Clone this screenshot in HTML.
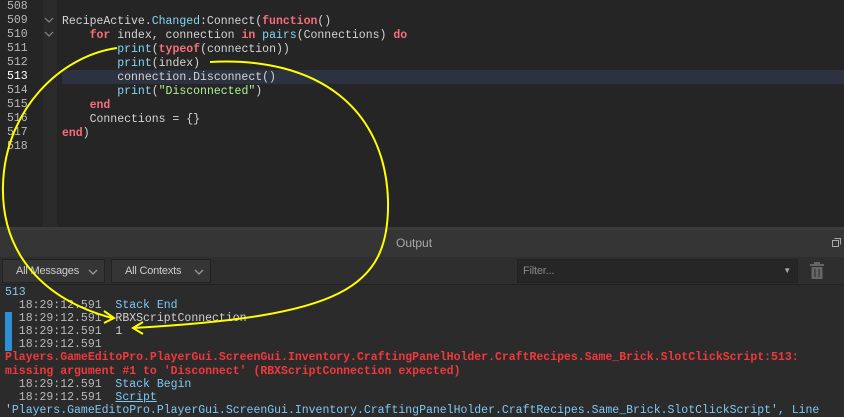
<!DOCTYPE html>
<html><head><style>
*{margin:0;padding:0;box-sizing:border-box}
body{width:844px;height:413px;overflow:hidden;background:#2b2b2b;font-family:"Liberation Mono",monospace;position:relative}
.ed{position:absolute;left:0;top:0;width:844px;height:227px;background:#252525}
.gut{position:absolute;left:43px;top:0;width:14px;height:227px;background:#2a2a2a}
.ln{position:absolute;left:7px;color:#b8b8b8;font-size:11.5px;line-height:14px}
.code{position:absolute;left:62px;top:1px;color:#d4d4d4;font-size:11.5px;line-height:14px;white-space:pre}
.k{color:#f86d7c;font-weight:bold}.b{color:#84d6f7}.s{color:#adf195}
.hl{position:absolute;left:62px;top:70px;width:782px;height:14px;background:#2d3240}
.sep{position:absolute;left:0;top:227px;width:844px;height:3px;background:#3b3b3b}
.title{position:absolute;left:0;top:230px;width:844px;height:27px;background:#353535;color:#aaa;font-family:"Liberation Sans",sans-serif;font-size:12px}
.tb{position:absolute;left:0;top:257px;width:844px;height:28px;background:#2e2e2e;border-bottom:1px solid #222}
.dd{position:absolute;top:2px;height:24px;border:1px solid #222;background:#353535;color:#ccc;font-family:"Liberation Sans",sans-serif;font-size:11px;line-height:22px;padding-left:13px;letter-spacing:-0.2px}
.log{position:absolute;left:5px;top:286px;font-size:11.5px;line-height:13.1px;color:#d0d0d0;white-space:pre}
.t{color:#b8b8b8}.c{color:#7fc8f4}.r{color:#f0393d;font-weight:bold}
</style></head><body>
<div class="ed">
<div class="gut"></div>
<div class="hl"></div>
<div class="ln" style="top:0px">508<br>509<br>510<br>511<br>512<br><span style="color:#fff">513</span><br>514<br>515<br>516<br>517<br>518</div>
<svg style="position:absolute;left:44px;top:16px" width="10" height="24" fill="none" stroke="#888" stroke-width="1.2"><path d="M1 2l4 4 4-4M1 16l4 4 4-4"/></svg>
<div class="code">
RecipeActive.<span class="b">Changed</span>:Connect(<span class="k">function</span>()
    <span class="k">for</span> index, connection <span class="k">in</span> <span class="b">pairs</span>(Connections) <span class="k">do</span>
        <span class="b">print</span>(<span class="k">typeof</span>(connection))
        <span class="b">print</span>(index)
        connection.Disconnect()
        <span class="b">print</span>(<span class="s">"Disconnected"</span>)
    <span class="k">end</span>
    Connections = {}
<span class="k">end</span>)</div>
</div>
<div class="sep"></div>
<div class="title"><span style="position:absolute;left:396px;top:6px">Output</span>
<svg style="position:absolute;left:832px;top:8px" width="9" height="9"><rect x="0.5" y="2.5" width="6" height="6" fill="none" stroke="#aaa"/><path d="M2.5 .5h6v6" fill="none" stroke="#aaa"/></svg></div>
<div class="tb">
<div class="dd" style="left:2px;width:103px">All Messages<svg style="position:absolute;right:6px;top:9px" width="10" height="6" fill="none" stroke="#999" stroke-width="1.3"><path d="M1 1l4 4 4-4"/></svg></div>
<div class="dd" style="left:111px;width:100px">All Contexts<svg style="position:absolute;right:6px;top:9px" width="10" height="6" fill="none" stroke="#999" stroke-width="1.3"><path d="M1 1l4 4 4-4"/></svg></div>
<div class="dd" style="left:517px;width:281px;background:#262626;color:#888;padding-left:5px">Filter...<span style="position:absolute;right:6px;font-size:8px;color:#aaa">&#9660;</span></div>
<svg style="position:absolute;left:810px;top:5px" width="14" height="17"><rect x="0" y="2" width="14" height="2" fill="#666"/><rect x="4" y="0" width="6" height="2" fill="#666"/><rect x="1.5" y="5" width="11" height="12" rx="1" fill="#666"/><rect x="4.5" y="7" width="1" height="8" fill="#2e2e2e"/><rect x="8.5" y="7" width="1" height="8" fill="#2e2e2e"/></svg>
</div>
<div style="position:absolute;left:5px;top:312px;width:7px;height:39px;background:#2d8fd5"></div>
<div class="log"><span class="c">513</span>
<span class="t">  18:29:12.591  </span><span class="c">Stack End</span>
<span class="t">  18:29:12.591  </span>RBXScriptConnection
<span class="t">  18:29:12.591  </span>1
<span class="t">  18:29:12.591</span>
<span class="r">Players.GameEditoPro.PlayerGui.ScreenGui.Inventory.CraftingPanelHolder.CraftRecipes.Same_Brick.SlotClickScript:513:
missing argument #1 to 'Disconnect' (RBXScriptConnection expected)</span>
<span class="t">  18:29:12.591  </span><span class="c">Stack Begin</span>
<span class="t">  18:29:12.591  </span><span class="c" style="text-decoration:underline">Script</span>
<span class="c">'Players.GameEditoPro.PlayerGui.ScreenGui.Inventory.CraftingPanelHolder.CraftRecipes.Same_Brick.SlotClickScript', Line</span></div>
<svg style="position:absolute;left:0;top:0" width="844" height="413" fill="none" stroke="#ffff00" stroke-width="2">
<path d="M117 48 C60 56 5 110 3 185 C1 255 45 300 112 318"/>
<path d="M104 311 L114 318 L104 323"/>
<path d="M210 62 C320 56 385 110 388 200 C390 290 340 316 133 328"/>
<path d="M143 322 L133 328 L143 334"/>
</svg>
</body></html>
